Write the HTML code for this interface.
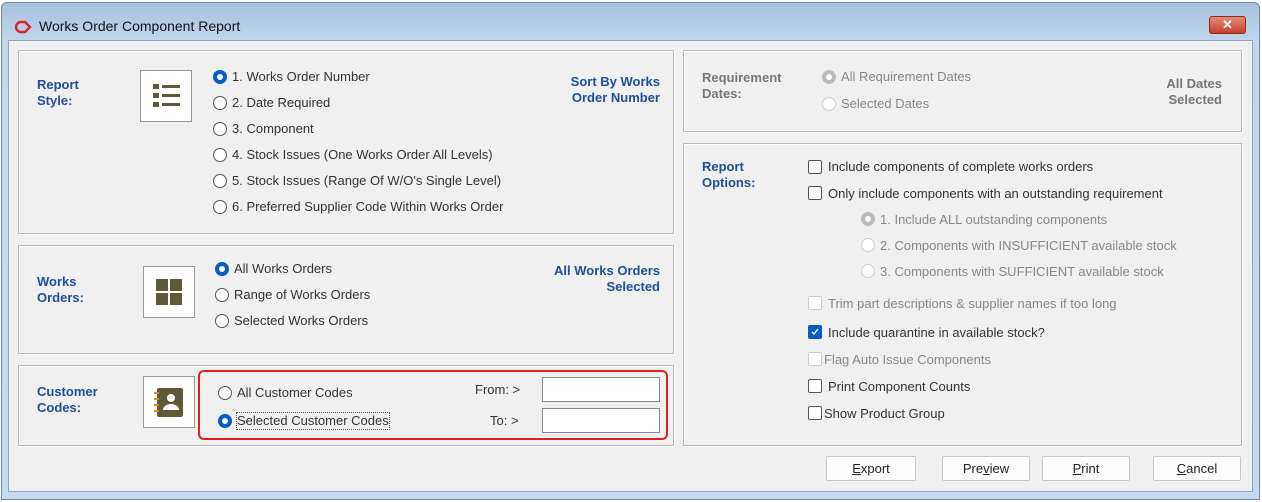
<!DOCTYPE html>
<html><head><style>
*{box-sizing:border-box;margin:0;padding:0}
body{width:1262px;height:502px;overflow:hidden;background:#fff;font-family:"Liberation Sans",sans-serif;font-size:13px;color:#333;position:relative}
.win{position:absolute;left:1px;top:2px;width:1259px;height:498px;background:linear-gradient(#a7c1dd,#c3d7ec 40px,#c6daef);border:1px solid #6d8aa8;border-radius:6px 6px 0 0}
.client{position:absolute;left:8px;top:40px;width:1245px;height:452px;background:#f0f0f0;border:1px solid #8fa6bf}
.a{position:absolute;white-space:nowrap}
.panel{position:absolute;border:1px solid #b9b9b9;box-shadow:inset 1px 1px 0 #fff,1px 1px 0 #fff}
.lbl{position:absolute;color:#1f4e9a;font-weight:bold;font-size:13px;line-height:16px}
.r{position:absolute;width:14px;height:14px;border:1px solid #555;border-radius:50%;background:#fff}
.r.on{border:4px solid #0a5cc2}
.r.dis{border-color:#ccc}
.r.dison{border:4px solid #bbb}
.c{position:absolute;width:14px;height:14px;border:1px solid #555;border-radius:2px;background:#fff}
.c.dis{border-color:#ccc}
.c.on{background:#0a5cc2;border-color:#0a5cc2}
.t{position:absolute;white-space:nowrap;line-height:16px}
.g{color:#888}
.ico{position:absolute;width:52px;height:52px;background:#fff;border:1px solid #999}
.btn{position:absolute;height:25px;background:#fdfdfd;border:1px solid #c8c8c8;border-radius:2px;text-align:center;line-height:23px;color:#222}
.inp{position:absolute;width:118px;height:25px;background:#fff;border:1px solid #8a8a8a}
</style></head><body>
<div class="win">
<svg class="a" style="left:12px;top:17px" width="18" height="14" viewBox="0 0 18 14"><path d="M7 2a5 5 0 1 0 0 10l4 0 5-5-5-5z" fill="none" stroke="#e02030" stroke-width="2.4"/></svg>
<div class="a" style="left:37px;top:15px;font-size:14px;color:#111">Works Order Component Report</div>
<div class="a" style="left:1207px;top:13px;width:37px;height:18px;border-radius:3px;background:linear-gradient(#e48a78,#c4422c);border:1px solid #8a2b1c;color:#fff;font-weight:bold;text-align:center;line-height:16px;font-size:13px">✕</div>
</div>
<div class="client"></div>

<div class="panel" style="left:18px;top:50px;width:656px;height:184px"></div>
<div class="panel" style="left:18px;top:245px;width:656px;height:109px"></div>
<div class="panel" style="left:18px;top:365px;width:656px;height:81px"></div>
<div class="panel" style="left:683px;top:50px;width:559px;height:82px"></div>
<div class="panel" style="left:683px;top:143px;width:559px;height:303px"></div>

<div class="lbl" style="left:37px;top:77px">Report<br>Style:</div>
<div class="ico" style="left:140px;top:70px"><svg width="50" height="50"><g fill="#5e5a37"><rect x="12" y="13" width="6" height="5"/><rect x="12" y="22" width="6" height="5"/><rect x="12" y="31" width="6" height="5"/><rect x="21" y="14" width="18" height="3"/><rect x="21" y="23" width="18" height="3"/><rect x="21" y="32" width="18" height="3"/></g></svg></div>
<div class="r on" style="left:213px;top:70px"></div><div class="t" style="left:232px;top:69px">1. Works Order Number</div>
<div class="r" style="left:213px;top:96px"></div><div class="t" style="left:232px;top:95px">2. Date Required</div>
<div class="r" style="left:213px;top:122px"></div><div class="t" style="left:232px;top:121px">3. Component</div>
<div class="r" style="left:213px;top:148px"></div><div class="t" style="left:232px;top:147px">4. Stock Issues (One Works Order All Levels)</div>
<div class="r" style="left:213px;top:174px"></div><div class="t" style="left:232px;top:173px">5. Stock Issues (Range Of W/O's Single Level)</div>
<div class="r" style="left:213px;top:200px"></div><div class="t" style="left:232px;top:199px">6. Preferred Supplier Code Within Works Order</div>
<div class="lbl" style="left:520px;top:74px;width:140px;text-align:right">Sort By Works<br>Order Number</div>

<div class="lbl" style="left:37px;top:274px">Works<br>Orders:</div>
<div class="ico" style="left:143px;top:266px"><svg width="50" height="50"><g fill="#5e5a37"><rect x="12" y="12" width="12" height="12"/><rect x="26" y="12" width="12" height="12"/><rect x="12" y="26" width="12" height="12"/><rect x="26" y="26" width="12" height="12"/></g></svg></div>
<div class="r on" style="left:215px;top:262px"></div><div class="t" style="left:234px;top:261px">All Works Orders</div>
<div class="r" style="left:215px;top:288px"></div><div class="t" style="left:234px;top:287px">Range of Works Orders</div>
<div class="r" style="left:215px;top:314px"></div><div class="t" style="left:234px;top:313px">Selected Works Orders</div>
<div class="lbl" style="left:500px;top:263px;width:160px;text-align:right">All Works Orders<br>Selected</div>

<div class="lbl" style="left:37px;top:384px">Customer<br>Codes:</div>
<div class="ico" style="left:143px;top:376px"><svg width="50" height="50"><rect x="13" y="11" width="26" height="29" rx="2" fill="#5e5a37"/><g fill="#d88a20"><rect x="10" y="15" width="5" height="2"/><rect x="10" y="21" width="5" height="2"/><rect x="10" y="27" width="5" height="2"/><rect x="10" y="33" width="5" height="2"/></g><circle cx="27" cy="21" r="4" fill="#fff"/><path d="M19 33a8 6 0 0 1 16 0z" fill="#fff"/></svg></div>
<div class="a" style="left:198px;top:370px;width:470px;height:70px;border:2px solid #e02020;border-radius:6px"></div>
<div class="r" style="left:218px;top:386px"></div><div class="t" style="left:237px;top:385px">All Customer Codes</div>
<div class="r on" style="left:218px;top:414px"></div><div class="t" style="left:237px;top:413px;outline:1px dotted #555">Selected Customer Codes</div>
<div class="t" style="left:475px;top:382px">From: &gt;</div>
<div class="t" style="left:490px;top:413px">To: &gt;</div>
<div class="inp" style="left:542px;top:377px"></div>
<div class="inp" style="left:542px;top:408px"></div>

<div class="lbl g" style="left:702px;top:70px;color:#777">Requirement<br>Dates:</div>
<div class="r dison" style="left:822px;top:70px"></div><div class="t g" style="left:841px;top:69px">All Requirement Dates</div>
<div class="r dis" style="left:822px;top:97px"></div><div class="t g" style="left:841px;top:96px">Selected Dates</div>
<div class="lbl" style="left:1100px;top:76px;width:122px;text-align:right;color:#777">All Dates<br>Selected</div>

<div class="lbl" style="left:702px;top:159px">Report<br>Options:</div>
<div class="c" style="left:808px;top:160px"></div><div class="t" style="left:828px;top:159px">Include components of complete works orders</div>
<div class="c" style="left:808px;top:186px"></div><div class="t" style="left:828px;top:186px">Only include components with an outstanding requirement</div>
<div class="r dison" style="left:861px;top:212px"></div><div class="t g" style="left:880px;top:212px">1. Include ALL outstanding components</div>
<div class="r dis" style="left:861px;top:238px"></div><div class="t g" style="left:880px;top:238px">2. Components with INSUFFICIENT available stock</div>
<div class="r dis" style="left:861px;top:264px"></div><div class="t g" style="left:880px;top:264px">3. Components with SUFFICIENT available stock</div>
<div class="c dis" style="left:808px;top:296px"></div><div class="t g" style="left:828px;top:296px">Trim part descriptions &amp; supplier names if too long</div>
<div class="c on" style="left:808px;top:325px"><svg width="12" height="12" style="position:absolute;left:0;top:0"><path d="M3 6l2 2 4-5" stroke="#fff" stroke-width="1.4" fill="none"/></svg></div><div class="t" style="left:828px;top:325px">Include quarantine in available stock?</div>
<div class="c dis" style="left:808px;top:352px"></div><div class="t g" style="left:824px;top:352px">Flag Auto Issue Components</div>
<div class="c" style="left:808px;top:379px"></div><div class="t" style="left:828px;top:379px">Print Component Counts</div>
<div class="c" style="left:808px;top:406px"></div><div class="t" style="left:824px;top:406px">Show Product Group</div>

<div class="btn" style="left:826px;top:456px;width:90px"><u>E</u>xport</div>
<div class="btn" style="left:942px;top:456px;width:88px">Pre<u>v</u>iew</div>
<div class="btn" style="left:1042px;top:456px;width:88px"><u>P</u>rint</div>
<div class="btn" style="left:1153px;top:456px;width:88px"><u>C</u>ancel</div>
</body></html>
